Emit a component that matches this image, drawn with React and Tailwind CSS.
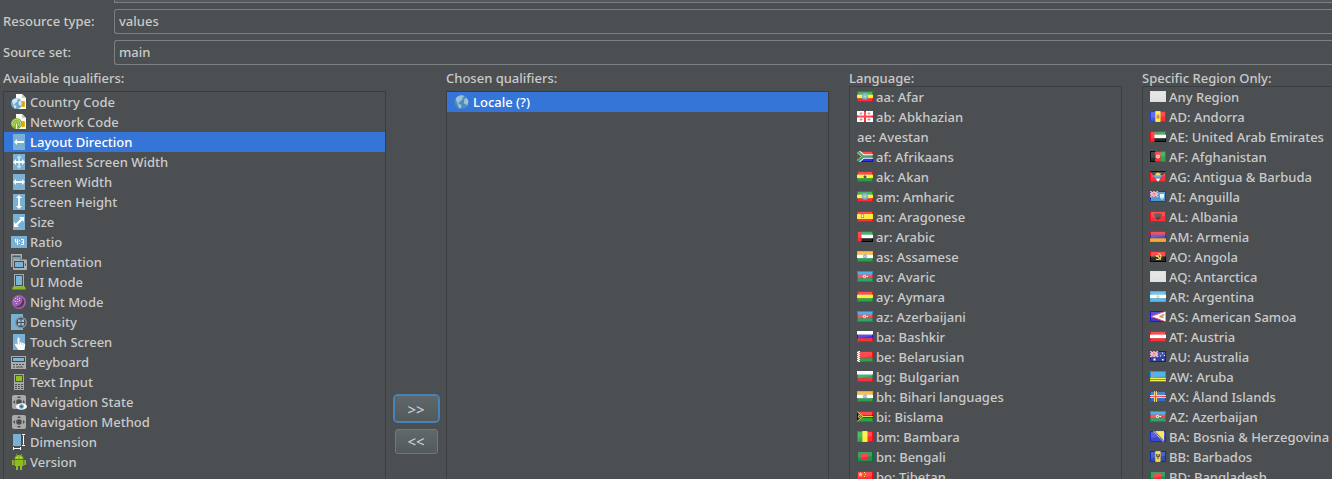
import React from "react";

const BLUE = "#78b1d4";

const Sheet = () => (
  <>
    <path d="M5 0h6l4 4v11H5z" fill="#fbfbf6" />
    <path d="M11 0l4 4h-4z" fill="#c9c9c4" />
    <path d="M9 7h5v6H9z" fill="#f2cf2c" />
    <path d="M9 9h5M9 11h5M12 7v6" stroke="#b98d12" strokeWidth=".7" />
  </>
);

const Globe = ({ cx = 5.5, cy = 9.5, r = 5.5, sea = "#6ea6cc", land = "#d3e6f2" }) => (
  <g transform={`translate(${cx} ${cy}) scale(${r / 6})`}>
    <circle r="6" fill={sea} />
    <path d="M-5-2.600C-4-5-1-6 1.500-5.600L2-4 .5-3.500 1-2-1-1-1.500.500-3 0-2 2 0 2.500-.5 5-2 5.500-3 2.500z" fill={land} />
    <path d="M2.500-2.500l2-1L6-.5 5 3 3.500 2 2 1z" fill={land} />
  </g>
);

const Tile = () => <path d="M2 0h12v16H2z" fill={BLUE} />;

const Pad = () => (
  <>
    <rect x="1" y="1" width="14" height="14" rx="2" fill="#a9a9a9" />
    <circle cx="8" cy="8" r="2.800" fill="#4d4d4d" />
    <path d="M8 2l2 2H6zM8 14l2-2H6zM2 8l2-2v4zM14 8l-2-2v4z" fill="#4d4d4d" />
  </>
);

const icons = {
  country: <><Sheet /><Globe cx={5.5} cy={9.5} r={5.5} /></>,
  network: (
    <>
      <Sheet />
      <circle cx="5.500" cy="9.500" r="5.500" fill="#7fb022" />
      <path d="M5.500 9.500V15" stroke="#eef6dc" strokeWidth="1.200" />
      <path d="M3.800 11.500a2.400 2.400 0 1 1 3.400 0M2.300 12.500a4.300 4.300 0 1 1 6.400 0" fill="none" stroke="#dcecb8" strokeWidth=".8" />
    </>
  ),
  layout: <><Tile /><path d="M3 8l3-3v2h7v2H6v2z" fill="#fff" /></>,
  smallest: (
    <>
      <Tile />
      <path d="M8 1l2.500 3H9v8h1.500L8 15l-2.500-3H7V4H5.500z" fill="#c3def0" />
      <path d="M2 8l3-3v2h6V5l3 3-3 3V9H5v2z" fill="#fff" />
    </>
  ),
  width: <><Tile /><path d="M2 8l3-3v2h6V5l3 3-3 3V9H5v2z" fill="#fff" /></>,
  height: <><Tile /><path d="M8 1l3 3H9v8h2l-3 3-3-3h2V4H5z" fill="#fff" /></>,
  size: <><Tile /><path d="M13 3v5l-1.700-1.700L6.300 11.300 8 13H3V8l1.700 1.700 5-5L8 3z" fill="#fff" /></>,
  ratio: (
    <>
      <path d="M0 2h16v12H0z" fill={BLUE} />
      <path d="M4.500 5v3h3M6.500 5v6M10 5.500h2.500v5H10M10.500 8h2" fill="none" stroke="#fff" strokeWidth="1" />
      <path d="M8 6h1v1H8zM8 9h1v1H8z" fill="#fff" />
    </>
  ),
  orientation: (
    <>
      <path d="M.7 13V.7h9.600V5" fill="#54585a" stroke="#b0b0b0" strokeWidth="1.400" />
      <path d="M2 3h7v3H2z" fill="#6ba6cb" />
      <rect x="2" y="5.500" width="14" height="10.500" rx="1" fill="#b0b0b0" />
      <path d="M3 7h10v7H3z" fill="#45484a" />
      <path d="M4 8h8v5H4z" fill="#7ab2d5" />
      <path d="M14 9.500h1v2h-1z" fill="#444" />
    </>
  ),
  ui: (
    <>
      <path d="M3 0h10v13H3z" fill="#a9aaaa" />
      <path d="M4 1h8v11H4z" fill="#474b4d" />
      <path d="M5 2h6v9H5z" fill="#7db5d6" />
      <path d="M2 12.500h12l1 3H1z" fill="#8bbd1c" />
    </>
  ),
  night: (
    <>
      <circle cx="8" cy="8" r="7" fill="#a15fb0" />
      <path d="M10.500 3.500A5.800 5.800 0 0 1 3.500 11.800 5.800 5.800 0 0 0 13 9.500 6 6 0 0 0 10.500 3.500z" fill="#513657" />
      <path d="M4 4h1v1H4zM6 2.500h1v1H6zM6 5h1v1H6zM8 4h1v1H8zM4 7h1v1H4zM6 7h1v1H6zM8 6h1v1H8zM2.500 6h1v1h-1zM5 9h1v1H5z" fill="#dec2e4" />
    </>
  ),
  density: (
    <>
      <path d="M0 0h12v16H0z" fill={BLUE} />
      <circle cx="10" cy="8.500" r="5.300" fill="#4b5155" stroke="#8b9195" strokeWidth="1.200" />
      <path d="M7 5.500h2.500V8H7zM10.500 5.500H13V8h-2.500zM7 9h2.500v2.500H7zM10.500 9H13v2.500h-2.500z" fill="#91c1dd" />
    </>
  ),
  touch: (
    <>
      <Tile />
      <path d="M6.500 4.500a1 1 0 0 1 2 0V8l5 1.500c1 .3.800 1.500.5 3L13 16H7.500L4 11c-.7-1 .5-1.800 1.500-1l1 1z" fill="#fff" />
      <path d="M8.500 8v2.500M10.500 9v2M12.300 9.500v2" stroke="#9fb4c2" strokeWidth=".5" />
    </>
  ),
  keyboard: (
    <>
      <path d="M0 2h15v13H0z" fill="#adadad" />
      <path d="M1 3h13v5H1z" fill="#44484a" />
      <path d="M2 4h11v3H2z" fill="#7fb6d6" />
      <path d="M2 10.500h11M2 13h3M10 13h3" stroke="#4c4f51" strokeDasharray="2 1" />
      <path d="M5 13h5" stroke="#4c4f51" />
    </>
  ),
  text: (
    <>
      <path d="M3 0h10v16H3z" fill="#a9a9a9" />
      <path d="M4 1h8v7H4z" fill="#4b5340" />
      <path d="M5 2h6v5H5z" fill="#8fbf24" />
      <path d="M4 10.500h8M4 12.500h8M4 14.500h8" stroke="#4c4f51" strokeDasharray="2 1" />
    </>
  ),
  navState: (
    <>
      <Pad />
      <ellipse cx="10.500" cy="12.500" rx="5.500" ry="3.200" fill="#f6fafc" />
      <circle cx="10.500" cy="12.500" r="2.300" fill="#5fa0c8" />
      <circle cx="10.500" cy="12.500" r="1" fill="#2c5877" />
    </>
  ),
  navMethod: <Pad />,
  dimension: (
    <>
      <path d="M2 0h8v12H2z" fill={BLUE} />
      <path d="M12.500 1.500v9M11 .500h3M11 11.500h3M3 14.500h6M2.500 13v3M9.500 13v3" stroke="#fff" />
    </>
  ),
  version: (
    <>
      <path d="M3.500 5.200a4.500 4.200 0 0 1 9 0z" fill="#8fbc1e" />
      <path d="M5 0l1.500 2M11 0L9.500 2" stroke="#8fbc1e" strokeWidth=".8" />
      <path d="M3.500 6h9v6h-9zM1 6h1.700v5H1zM13.300 6H15v5h-1.700zM5 12h2v4H5zM9 12h2v4H9z" fill="#8fbc1e" />
      <path d="M5.700 3.200h1v1h-1zM9.300 3.200h1v1h-1z" fill="#fff" />
    </>
  ),
  globe: <Globe cx={7.5} cy={8} r={7} sea="#4f8cbe" land="#9cc3d6" />,
};

// n equal stripes across the 16x11 flag
const rows = (...c) => c.map((f, i) => <rect key={i} y={(11 / c.length) * i} width="16" height={11 / c.length + 0.1} fill={f} />);
const cols = (...c) => c.map((f, i) => <rect key={i} x={(16 / c.length) * i} width={16 / c.length + 0.1} height="11" fill={f} />);
const union = (
  <>
    <path d="M0 0h8v6H0z" fill="#3a4fae" />
    <path d="M0 0l8 6M8 0L0 6" stroke="#f3b9c4" strokeWidth="1.200" />
    <path d="M4 0v6M0 3h8" stroke="#fff" strokeWidth="1.800" />
    <path d="M4 0v6M0 3h8" stroke="#ec3044" strokeWidth="1" />
  </>
);

const flags = {
  et: <>{rows("#0f9430", "#fbf20a", "#ff0a12")}<circle cx="8" cy="5.500" r="3.200" fill="#55a3cf" /><path d="M8 3.500l.6 1.500H10L9 6l.4 1.500L8 6.500l-1.400 1L7 6 6 5h1.400z" fill="#a9cf8a" /></>,
  ge: <><path d="M0 0h16v11H0z" fill="#fff" /><path d="M8 0v11M0 5.500h16" stroke="#ff1220" strokeWidth="2" /><path d="M4 1v3M2.500 2.500h3M12 1v3M10.500 2.500h3M4 7v3M2.500 8.500h3M12 7v3M10.500 8.500h3" stroke="#f36a72" /></>,
  za: <><path d="M0 0h16v5.500H0z" fill="#ff0f12" /><path d="M0 5.500h16V11H0z" fill="#1010d8" /><path d="M0 0l6 5.500L0 11M6 5.500h10" fill="none" stroke="#fff" strokeWidth="4.500" /><path d="M0 0l6 5.500L0 11M6 5.500h10" fill="none" stroke="#108c45" strokeWidth="2.600" /><path d="M0 1.500l4.500 4L0 9.500z" fill="#111" stroke="#f3d420" strokeWidth=".8" /></>,
  gh: <>{rows("#ff0a12", "#fbf20a", "#0c8b22")}<path d="M8 3.500l.7 1.500H10L9 6l.4 1.500L8 6.700l-1.400.8L7 6 6 5h1.300z" fill="#222" /></>,
  es: <><path d="M0 0h16v11H0z" fill="#ff1016" /><path d="M0 3h16v5H0z" fill="#fde81c" /><path d="M4 3h3v4H4z" fill="#e56a3a" /><path d="M5 4h1v2H5z" fill="#fff" /></>,
  ae: <>{rows("#0b9230", "#ffffff", "#040404")}<path d="M0 0h4.500v11H0z" fill="#ff0a12" /></>,
  in: <>{rows("#fba80c", "#ffffff", "#0c8f2c")}<circle cx="8" cy="5.500" r="1.600" fill="#b7c3e4" stroke="#5573ba" strokeWidth=".8" /></>,
  az: <>{rows("#0c98e4", "#ff1c26", "#0b9650")}<circle cx="7.500" cy="5.500" r="1.200" fill="none" stroke="#fff" /><path d="M9.500 5h1.500v1H9.500z" fill="#fff" /></>,
  bo: rows("#ff1014", "#f9ea08", "#0c952c"),
  ru: rows("#ffffff", "#2010e0", "#ff1014"),
  by: <><path d="M0 0h16v7.500H0z" fill="#ff0d14" /><path d="M0 7.500h16V11H0z" fill="#0b962c" /><path d="M0 0h3v11H0z" fill="#fff" /><path d="M.7 0v11M2.300 1v10" stroke="#ef1820" strokeDasharray="1 1" /></>,
  bg: rows("#ffffff", "#0c9648", "#ff0d14"),
  vu: <><path d="M0 0h16v5.500H0z" fill="#ff0d14" /><path d="M0 5.500h16V11H0z" fill="#0b962c" /><path d="M0 0l7 5.500L0 11z" fill="#111" /><path d="M6 5.500h10" stroke="#111" strokeWidth="2.500" /><path d="M0 .500l6 5h10M0 10.500l6-5" fill="none" stroke="#f5dd22" strokeWidth=".9" /><circle cx="2.500" cy="5.500" r="1.100" fill="none" stroke="#f5dd22" strokeWidth=".8" /></>,
  ml: cols("#0ea634", "#fbee12", "#ff0d14"),
  bd: <><path d="M0 0h16v11H0z" fill="#027a34" /><circle cx="7.700" cy="5.500" r="3.700" fill="#ff0612" /></>,
  cn: <><path d="M0 0h16v11H0z" fill="#fb0c12" /><path d="M3.500 1l.7 1.600h1.600L4.600 3.700 5 5.500 3.500 4.500 2 5.500l.4-1.800L1.200 2.600h1.600zM7 1h1v1H7zM8 3h1v1H8zM7 5h1v1H7z" fill="#fadf2e" /></>,
  blank: <path d="M0 0h16v11H0z" fill="#dedede" />,
  ad: <>{cols("#2a3cdc", "#fbe920", "#ff0d14")}<path d="M6.500 3.500h3v4h-3z" fill="#d98343" /><path d="M8 4v3" stroke="#b94d3c" /></>,
  af: <>{cols("#0a0a0a", "#ff0d14", "#0a9a2c")}<circle cx="8" cy="5.500" r="2" fill="#f9c7c7" /><circle cx="8" cy="5.500" r=".8" fill="#ee5058" /></>,
  ag: <><path d="M0 0h16v11H0z" fill="#ff0d14" /><path d="M0 0h16L8 11z" fill="#121212" /><path d="M3 4.200h10L10.500 7.500h-5z" fill="#3f8fd2" /><path d="M5.500 7.500h5L8 11z" fill="#fff" /><path d="M8 1l1 1.500 1.700-.5-.5 1.800L11 4.500H5l.8-.7L5.300 2l1.700.5z" fill="#f6d92b" /></>,
  ai: <><path d="M0 0h16v11H0z" fill="#0f3cb8" /><path d="M1 1h14v9H1z" fill="#2f86cf" />{union}<path d="M10 3h4v3.500L12 9l-2-2.500z" fill="#f6f3d6" /><path d="M10.500 6.500h3L12 8z" fill="#6cc4df" /></>,
  al: <><path d="M0 0h16v11H0z" fill="#fb0d14" /><path d="M8 3l1-1 1 1 2-.5-.5 3L10 6.500l.5 1.500L9 8l-1 1.500L7 8l-1.500 0L6 6.500 4.500 5.500 4 2.500 6 3l1-1z" fill="#432020" /></>,
  am: rows("#ff0d14", "#2f2dcc", "#f89c0c"),
  ao: <><path d="M0 0h16v5.500H0z" fill="#ff0d14" /><path d="M0 5.500h16V11H0z" fill="#080808" /><path d="M8 2.500a3 3 0 1 1-2 5.300M6.500 4.500l4.500 4" fill="none" stroke="#f4de23" strokeWidth="1.100" /><path d="M6.500 4h2v2h-2z" fill="#f4de23" /></>,
  ar: <>{rows("#36b4ee", "#ffffff", "#36b4ee")}<circle cx="8" cy="5.500" r="1.600" fill="#f4d844" /></>,
  as: <><path d="M0 0h16v11H0z" fill="#2018cc" /><path d="M1 5.500L16 0v11z" fill="#fff" stroke="#ec2731" strokeWidth="1" /><path d="M9 5l4-2 2 .5-2 2 1 2-4-1z" fill="#b58a4b" /></>,
  at: rows("#ff0d14", "#ffffff", "#ff0d14"),
  au: <><path d="M0 0h16v11H0z" fill="#10228f" />{union}<path d="M3.500 7.500h2v2h-2zM12 1.500h1v1h-1zM10 4.500h1v1h-1zM14 4h1v1h-1zM12 8h1.500v1.500H12z" fill="#fff" /></>,
  aw: <><path d="M0 0h16v11H0z" fill="#1798e2" /><path d="M0 7.500h16M0 9.500h16" stroke="#f6ea2f" /><path d="M2 1.500h2v2H2z" fill="#f04a4d" /></>,
  ax: <><path d="M0 0h16v11H0z" fill="#1159ba" /><path d="M5.500 0v11M0 5.500h16" stroke="#f9dc36" strokeWidth="3" /><path d="M5.500 0v11M0 5.500h16" stroke="#ec1f27" strokeWidth="1.200" /></>,
  ba: <><path d="M0 0h16v11H0z" fill="#1a2acb" /><path d="M5 0h9v10z" fill="#f7e22b" /><path d="M3.500 0l10 11" stroke="#fff" strokeDasharray="1 .7" /></>,
  bb: <>{cols("#0c30ab", "#fbcf12", "#0c30ab")}<path d="M6.500 3v2.500h3V3M8 3v5" fill="none" stroke="#292319" /></>,
};

const qualifiers = [
  ["country", "Country Code"],
  ["network", "Network Code"],
  ["layout", "Layout Direction"],
  ["smallest", "Smallest Screen Width"],
  ["width", "Screen Width"],
  ["height", "Screen Height"],
  ["size", "Size"],
  ["ratio", "Ratio"],
  ["orientation", "Orientation"],
  ["ui", "UI Mode"],
  ["night", "Night Mode"],
  ["density", "Density"],
  ["touch", "Touch Screen"],
  ["keyboard", "Keyboard"],
  ["text", "Text Input"],
  ["navState", "Navigation State"],
  ["navMethod", "Navigation Method"],
  ["dimension", "Dimension"],
  ["version", "Version"],
];

const languages = [
  ["et", "aa: Afar"],
  ["ge", "ab: Abkhazian"],
  [null, "ae: Avestan"],
  ["za", "af: Afrikaans"],
  ["gh", "ak: Akan"],
  ["et", "am: Amharic"],
  ["es", "an: Aragonese"],
  ["ae", "ar: Arabic"],
  ["in", "as: Assamese"],
  ["az", "av: Avaric"],
  ["bo", "ay: Aymara"],
  ["az", "az: Azerbaijani"],
  ["ru", "ba: Bashkir"],
  ["by", "be: Belarusian"],
  ["bg", "bg: Bulgarian"],
  ["in", "bh: Bihari languages"],
  ["vu", "bi: Bislama"],
  ["ml", "bm: Bambara"],
  ["bd", "bn: Bengali"],
  ["cn", "bo: Tibetan"],
];

const regions = [
  ["blank", "Any Region"],
  ["ad", "AD: Andorra"],
  ["ae", "AE: United Arab Emirates"],
  ["af", "AF: Afghanistan"],
  ["ag", "AG: Antigua & Barbuda"],
  ["ai", "AI: Anguilla"],
  ["al", "AL: Albania"],
  ["am", "AM: Armenia"],
  ["ao", "AO: Angola"],
  ["blank", "AQ: Antarctica"],
  ["ar", "AR: Argentina"],
  ["as", "AS: American Samoa"],
  ["at", "AT: Austria"],
  ["au", "AU: Australia"],
  ["aw", "AW: Aruba"],
  ["ax", "AX: Åland Islands"],
  ["az", "AZ: Azerbaijan"],
  ["ba", "BA: Bosnia & Herzegovina"],
  ["bb", "BB: Barbados"],
  ["bd", "BD: Bangladesh"],
];

function Icon({ name }) {
  return (
    <svg viewBox="0 0 16 16" className="size-4 shrink-0" aria-hidden="true">
      {icons[name]}
    </svg>
  );
}

function Flag({ name }) {
  return (
    <svg viewBox="0 0 16 11" className="mb-px h-[11px] w-4 shrink-0" aria-hidden="true">
      {flags[name]}
      <path d="M1 1h14v9H1z" fill="#fff" opacity=".14" />
      <path d="M1 1h14v4L1 7z" fill="#fff" opacity=".14" />
    </svg>
  );
}

function List({ id, label, items, selected, flag, className = "" }) {
  return (
    <section className="flex min-w-0 flex-col">
      <h2 id={id} className={`pt-[5px] leading-4 whitespace-nowrap ${flag ? "" : "pb-[5px]"}`}>
        {label}
      </h2>
      <ul role="listbox" aria-labelledby={id} className={`grow border border-[#3b3e40] ${className}`}>
        {items.map(([icon, text]) => (
          <li
            key={text}
            role="option"
            aria-selected={text === selected}
            className={`flex h-5 items-center gap-[3px] pl-[7px] leading-5 whitespace-nowrap ${text === selected ? "bg-[#3675d8] text-white" : ""}`}
          >
            {icon && (flag ? <Flag name={icon} /> : <Icon name={icon} />)}
            <span>{text}</span>
          </li>
        ))}
      </ul>
    </section>
  );
}

function Field({ id, label, value }) {
  return (
    <div className="flex h-[25px] items-center">
      <label htmlFor={id} className="w-[111px] shrink-0">
        {label}
      </label>
      <select id={id} defaultValue={value} className="h-full grow appearance-none rounded-l-[3px] border border-r-0 border-[#7d8082] bg-transparent pl-1 outline-none">
        <option>{value}</option>
      </select>
    </div>
  );
}

export default function App() {
  return (
    <main className="h-screen overflow-hidden bg-[#4b4f51] pl-[3px] font-['Noto_Sans',sans-serif] text-[13px] font-medium text-[#cacaca]">
      <div className="ml-[111px] h-[3px] border-b border-l border-[#7d8082] bg-[#54595b]" />
      <div className="flex flex-col gap-1.5 pt-1.5">
        <Field id="type" label="Resource type:" value="values" />
        <Field id="source" label="Source set:" value="main" />
      </div>
      <div className="grid h-[calc(100vh-65px)] grid-cols-[383fr_60px_383fr_20px_273fr_20px_190fr]">
        <List id="available" label="Available qualifiers:" items={qualifiers} selected="Layout Direction" />
        <div className="flex flex-col items-center gap-2 pt-[331px]">
          <button type="button" aria-label="Add qualifier" autoFocus className="h-[25px] w-[43px] rounded-[3px] bg-linear-to-b from-[#5f6769] to-[#525a5c] pt-0.5 text-[15px] leading-none ring-2 ring-[#4584b8] outline-none">
            &gt;&gt;
          </button>
          <button type="button" aria-label="Remove qualifier" className="h-[25px] w-[43px] rounded-[3px] border border-[#71777a] bg-linear-to-b from-[#60686a] to-[#535a5c] text-[15px] leading-none">
            &lt;&lt;
          </button>
        </div>
        <List id="chosen" label="Chosen qualifiers:" items={[["globe", "Locale (?)"]]} selected="Locale (?)" />
        <div />
        <List id="language" label="Language:" items={languages} flag />
        <div />
        <List id="region" label="Specific Region Only:" items={regions} flag className="border-r-0" />
      </div>
    </main>
  );
}
